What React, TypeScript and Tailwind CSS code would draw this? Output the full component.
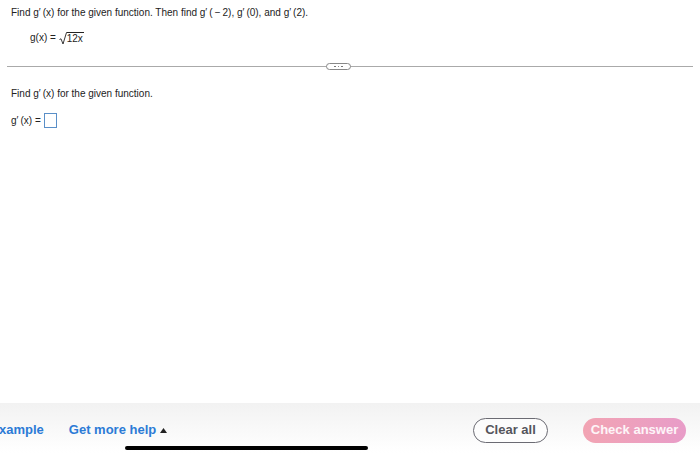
export default function App() {
  return (
    <div
      className="relative w-[700px] h-[453px] bg-white text-[#222] overflow-hidden flex flex-col"
      style={{ fontFamily: '"Liberation Sans", Arial, sans-serif' }}
    >
      <div className="pl-[11px] pt-[7px] text-[10px] leading-[12px]">
        Find g′{"\u2009"}(x) for the given function. Then find g′{"\u2009"}({"\u2009"}−{"\u2009"}2), g′{"\u2009"}(0), and g′{"\u2009"}(2).
      </div>
      <div className="pl-[30px] pt-[13px] text-[10px] leading-[12px] flex items-center">
        <span>g(x) =&nbsp;</span>
        <span className="flex items-end">
          <svg width="8" height="13" viewBox="0 0 8 13" className="-mb-[1px]">
            <path d="M0.5 7.5 L2 6.8 L4 12 L7.5 0.5 L8 0.5" fill="none" stroke="#222" strokeWidth="0.9" />
          </svg>
          <span className="border-t border-[#222] leading-[11px] pr-[1px]">12x</span>
        </span>
      </div>

      <div className="relative mx-[7px] mt-[22px] h-px bg-[#aaa]">
        <div className="absolute left-[319px] -top-[3px] w-[25px] h-[7px] rounded-full border border-[#888] bg-white flex items-center justify-center gap-[2px]">
          <span className="w-[1.5px] h-[1.5px] bg-[#666] rounded-full" />
          <span className="w-[1.5px] h-[1.5px] bg-[#666] rounded-full" />
          <span className="w-[1.5px] h-[1.5px] bg-[#666] rounded-full" />
        </div>
      </div>

      <div className="pl-[11px] pt-[21px] text-[10px] leading-[12px]">
        Find g′{"\u2009"}(x) for the given function.
      </div>
      <div className="pl-[11px] pt-[13px] text-[10px] leading-[12px] flex items-center">
        <span>g′{"\u2009"}(x) =&nbsp;</span>
        <span className="w-[13px] h-[15px] border border-[#5a8fc8] bg-white" />
      </div>

      <div className="flex-1" />

      <div className="h-[50px] pt-[4px] bg-gradient-to-b from-[#f2f2f2] to-white flex items-center relative">
        <span className="text-[13px] font-bold text-[#2c7bd6] ml-[-1px]">xample</span>
        <span className="text-[13px] font-bold text-[#2c7bd6] ml-[25px] flex items-center">
          Get more help
          <svg width="7" height="5" viewBox="0 0 7 5" className="ml-[4px] mt-[1px]">
            <path d="M0 5 L3.5 0 L7 5 Z" fill="#222" />
          </svg>
        </span>
        <div className="flex-1" />
        <button className="h-[25px] w-[75px] rounded-full border-[1.5px] border-[#6b6b73] text-[13px] font-bold text-[#55555c] bg-white/60 flex items-center justify-center">
          Clear all
        </button>
        <button className="ml-[35px] mr-[14px] h-[25px] w-[103px] rounded-full bg-gradient-to-r from-[#f2a4b3] to-[#e89cc8] text-[13px] font-bold text-white/90 flex items-center justify-center">
          Check answer
        </button>
        <div className="absolute left-[125px] top-[43px] w-[243px] h-[4px] rounded-full bg-black" />
      </div>
    </div>
  );
}
